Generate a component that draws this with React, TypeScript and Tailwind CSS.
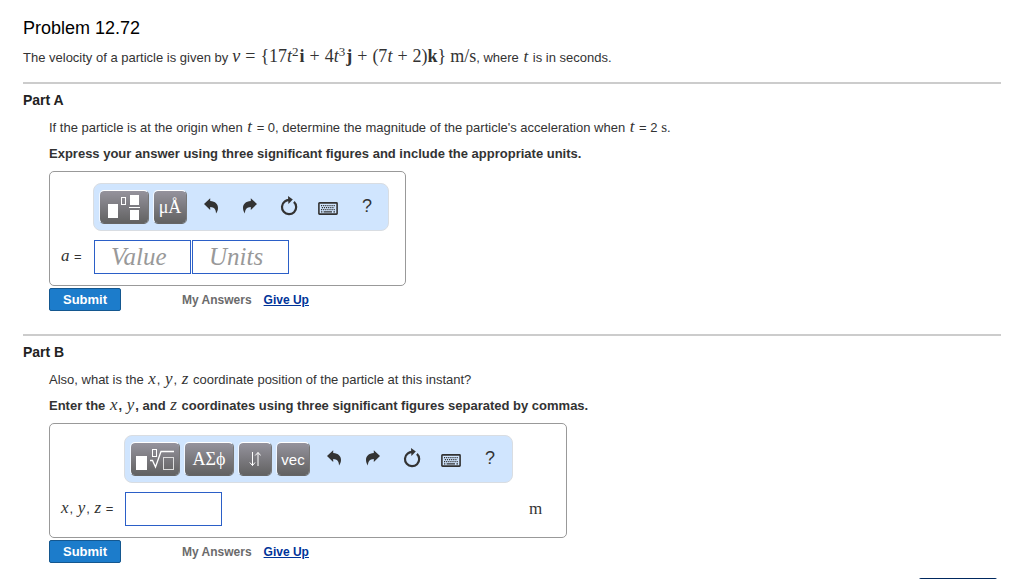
import type { ReactNode } from "react";

function Var({ children }: { children: ReactNode }) {
  return (
    <i className="mx-px font-['Liberation_Serif',serif] text-[17px] leading-none font-normal">
      {children}
    </i>
  );
}

function Op({ children }: { children: ReactNode }) {
  return <span className="mx-[5px]">{children}</span>;
}

function Formula() {
  return (
    <span className="ml-1 inline-flex items-baseline font-['Liberation_Serif',serif] text-[18px] leading-none">
      <i>v</i>
      <Op>=</Op>
      <span>{"{17"}</span>
      <i>t</i>
      <sup className="text-[13px] leading-none">2</sup>
      <b className="ml-px">i</b>
      <Op>+</Op>
      <span>4</span>
      <i>t</i>
      <sup className="text-[13px] leading-none">3</sup>
      <b className="ml-px">j</b>
      <Op>+</Op>
      <span>(7</span>
      <i>t</i>
      <Op>+</Op>
      <span>2)</span>
      <b>k</b>
      <span>{"}"}</span>
      <span className="ml-1">m/s</span>
    </span>
  );
}

function KeyButton({ label, wide, children }: { label: string; wide?: boolean; children: ReactNode }) {
  return (
    <button
      type="button"
      aria-label={label}
      className={`flex h-[34px] shrink-0 items-center justify-center rounded-[5px] border border-t-white border-r-[#777] border-b-[#666] border-l-white/70 bg-linear-to-b from-[#95939d] to-[#626262] bg-clip-padding text-white ${wide ? "w-[50px]" : "w-[34px]"}`}
    >
      {children}
    </button>
  );
}

function IconButton({ label, children }: { label: string; children: ReactNode }) {
  return (
    <button
      type="button"
      aria-label={label}
      className="flex h-8 w-[22px] items-center justify-center text-[#333]"
    >
      {children}
    </button>
  );
}

function UndoShape({ flip }: { flip?: boolean }) {
  return (
    <svg width="14" height="16" viewBox="0 0 14 16" fill="currentColor" className={flip ? "-scale-x-100" : ""}>
      <path d="M0 6 L6.2 0.2 V3.1 C11.4 3.4 14 6.2 14 10 C14 12.2 13.2 14 12 15.6 C12 11.4 10.3 9.2 6.2 9 V11.9 Z" />
    </svg>
  );
}

function Tools() {
  return (
    <div className="flex gap-[17px]">
      <IconButton label="Undo">
        <UndoShape />
      </IconButton>
      <IconButton label="Redo">
        <UndoShape flip />
      </IconButton>
      <IconButton label="Reset">
        <svg width="18" height="20" viewBox="0 0 18 20" fill="none">
          <path
            d="M4.6 5.6 A7.1 7.1 0 1 0 13.9 5.9 M4.6 5.6 Q6.6 3.7 9.6 3.8"
            stroke="currentColor"
            strokeWidth="2.2"
          />
          <path d="M8 0 L12.8 3.6 L8.4 8 Z" fill="currentColor" />
        </svg>
      </IconButton>
      <IconButton label="Keyboard">
        <svg width="20" height="13" viewBox="0 0 20 13" fill="none" className="mt-1">
          <rect x="0.9" y="0.9" width="18.2" height="11.2" rx="0.6" stroke="currentColor" strokeWidth="1.6" />
          <path
            d="M3 3.6 H17.5 M3.8 5.6 H16.5 M3 7.6 H17.5"
            stroke="currentColor"
            strokeWidth="1.1"
            strokeDasharray="1.2 0.9"
          />
          <path d="M3 9.8 H4.4 M5.6 9.8 H14 M15.4 9.8 H17" stroke="currentColor" strokeWidth="1.2" />
        </svg>
      </IconButton>
      <IconButton label="Help">
        <span className="text-[18px] leading-none">?</span>
      </IconButton>
    </div>
  );
}

function Toolbar({ children }: { children: ReactNode }) {
  return (
    <div className="flex h-12 items-start rounded-lg border border-[#d9dde2] bg-[#d0e5fe] pt-1.5 pl-[5px]">
      {children}
    </div>
  );
}

function Part({ title, children }: { title: string; children: ReactNode }) {
  return (
    <section className="h-[252px] border-t-2 border-[#cccccc]">
      <h2 className="mt-2 text-[14px] leading-4 font-bold text-[#222]">{title}</h2>
      <div className="ml-[26px]">{children}</div>
    </section>
  );
}

function Actions() {
  return (
    <div className="mt-0.5 flex items-center font-bold">
      <button
        type="submit"
        className="h-[23px] w-[72px] rounded-[2px] border border-[#14578f] bg-[#1c7ccb] text-[13px] leading-5 text-white"
      >
        Submit
      </button>
      <span className="ml-[61px] text-[12px] text-[#6b6b6b]">My Answers</span>
      <a href="#give-up" className="ml-3 text-[12px] text-[#003399] underline">
        Give Up
      </a>
    </div>
  );
}

const field =
  "h-[34px] w-[97px] border border-[#2b5fc7] bg-white pl-4 font-['Liberation_Serif',serif] text-[25px] text-[#333] italic outline-none placeholder:text-[#999] placeholder:opacity-100";

export default function App() {
  return (
    <div className="flex h-screen flex-col overflow-hidden bg-white px-[23px] font-['Liberation_Sans',Arial,sans-serif] text-[13px] text-[#333]">
      <header className="h-[82px] shrink-0 pt-[17px]">
        <h1 className="text-[18px] leading-[22px] text-black">Problem 12.72</h1>
        <p className="mt-2 leading-5">
          The velocity of a particle is given by
          <Formula />, where <Var>t</Var> is in seconds.
        </p>
      </header>
      <main className="shrink-0">
        <Part title="Part A">
          <p className="mt-2.5 leading-5">
            If the particle is at the origin when <Var>t</Var> = 0, determine the magnitude of the
            particle's acceleration when <Var>t</Var> = 2{" "}
            <span className="font-['Liberation_Serif',serif] text-[15px] leading-none">s</span>.
          </p>
          <p className="mt-1.5 leading-5 font-bold">
            Express your answer using three significant figures and include the appropriate units.
          </p>
          <form className="mt-[7px]" onSubmit={(e) => e.preventDefault()}>
            <div className="grid h-[115px] w-[357px] grid-cols-[43px_296px] content-start rounded-[5px] border border-[#999] pt-[11px]">
              <div className="col-start-2">
                <Toolbar>
                  <div className="mr-[13px] flex gap-1">
                    <KeyButton label="Templates" wide>
                      <svg width="32" height="26" viewBox="0 0 32 26" fill="none">
                        <rect x="0" y="10" width="10" height="14" fill="white" />
                        <rect x="13.5" y="3.5" width="4" height="7" stroke="white" />
                        <rect x="22" y="1" width="9" height="10" fill="white" />
                        <rect x="21" y="13" width="11" height="1" fill="white" />
                        <rect x="22" y="16" width="9" height="10" fill="white" />
                      </svg>
                    </KeyButton>
                    <KeyButton label="Unit symbols">
                      <span className="font-['Liberation_Serif',serif] text-[18px] leading-none">μÅ</span>
                    </KeyButton>
                  </div>
                  <Tools />
                </Toolbar>
              </div>
              <label htmlFor="value" className="mt-[9px] self-center pl-2.5 whitespace-nowrap">
                <Var>a</Var> =
              </label>
              <div className="mt-[9px] flex gap-px pl-px">
                <input id="value" placeholder="Value" className={field} />
                <input aria-label="Units" placeholder="Units" className={field} />
              </div>
            </div>
            <Actions />
          </form>
        </Part>
        <Part title="Part B">
          <p className="mt-2.5 leading-5">
            Also, what is the <Var>x</Var>, <Var>y</Var>, <Var>z</Var> coordinate position of the
            particle at this instant?
          </p>
          <p className="mt-1.5 leading-5 font-bold">
            Enter the <Var>x</Var>, <Var>y</Var>, and <Var>z</Var> coordinates using three significant
            figures separated by commas.
          </p>
          <form className="mt-[7px]" onSubmit={(e) => e.preventDefault()}>
            <div className="grid h-[115px] w-[518px] grid-cols-[74px_389px_auto] content-start rounded-[5px] border border-[#999] pt-[11px]">
              <div className="col-start-2">
                <Toolbar>
                  <div className="mr-[13px] flex gap-1">
                    <KeyButton label="Templates" wide>
                      <svg width="40" height="26" viewBox="0 0 40 26" fill="none">
                        <rect x="1" y="10" width="11" height="14" fill="white" />
                        <rect x="17.5" y="3.5" width="4" height="7" stroke="white" />
                        <path d="M15 14.5 H17.5 L20.5 21 L26 5.5 H39" stroke="white" strokeWidth="1.3" />
                        <rect x="28.5" y="11.5" width="10" height="12" stroke="#ddd" />
                      </svg>
                    </KeyButton>
                    <KeyButton label="Greek letters" wide>
                      <span className="font-['Liberation_Serif',serif] text-[18px] leading-none">ΑΣϕ</span>
                    </KeyButton>
                    <KeyButton label="Arrows">
                      <svg width="12" height="16" viewBox="0 0 12 16" fill="none" stroke="white">
                        <path d="M3.5 1 V14.5 M0.8 11.5 L3.5 14.5 L6 11.5" />
                        <path d="M9 15 V1.5 M6.2 4.5 L9 1.5 L11.7 4.5" />
                      </svg>
                    </KeyButton>
                    <KeyButton label="Vectors">
                      <span className="text-[15px] leading-none">vec</span>
                    </KeyButton>
                  </div>
                  <Tools />
                </Toolbar>
              </div>
              <label htmlFor="position" className="col-start-1 mt-[9px] self-center pl-2.5 whitespace-nowrap">
                <Var>x</Var>, <Var>y</Var>, <Var>z</Var> =
              </label>
              <div className="mt-[9px] pl-px">
                <input id="position" className={field} />
              </div>
              <span className="mt-[9px] self-center pl-4 font-['Liberation_Serif',serif] text-[17px]">m</span>
            </div>
            <Actions />
          </form>
        </Part>
      </main>
      <footer className="-mt-2 flex shrink-0 justify-end pr-1">
        <div className="h-6 w-[78px] rounded-[2px] bg-[#00285e]" />
      </footer>
    </div>
  );
}
